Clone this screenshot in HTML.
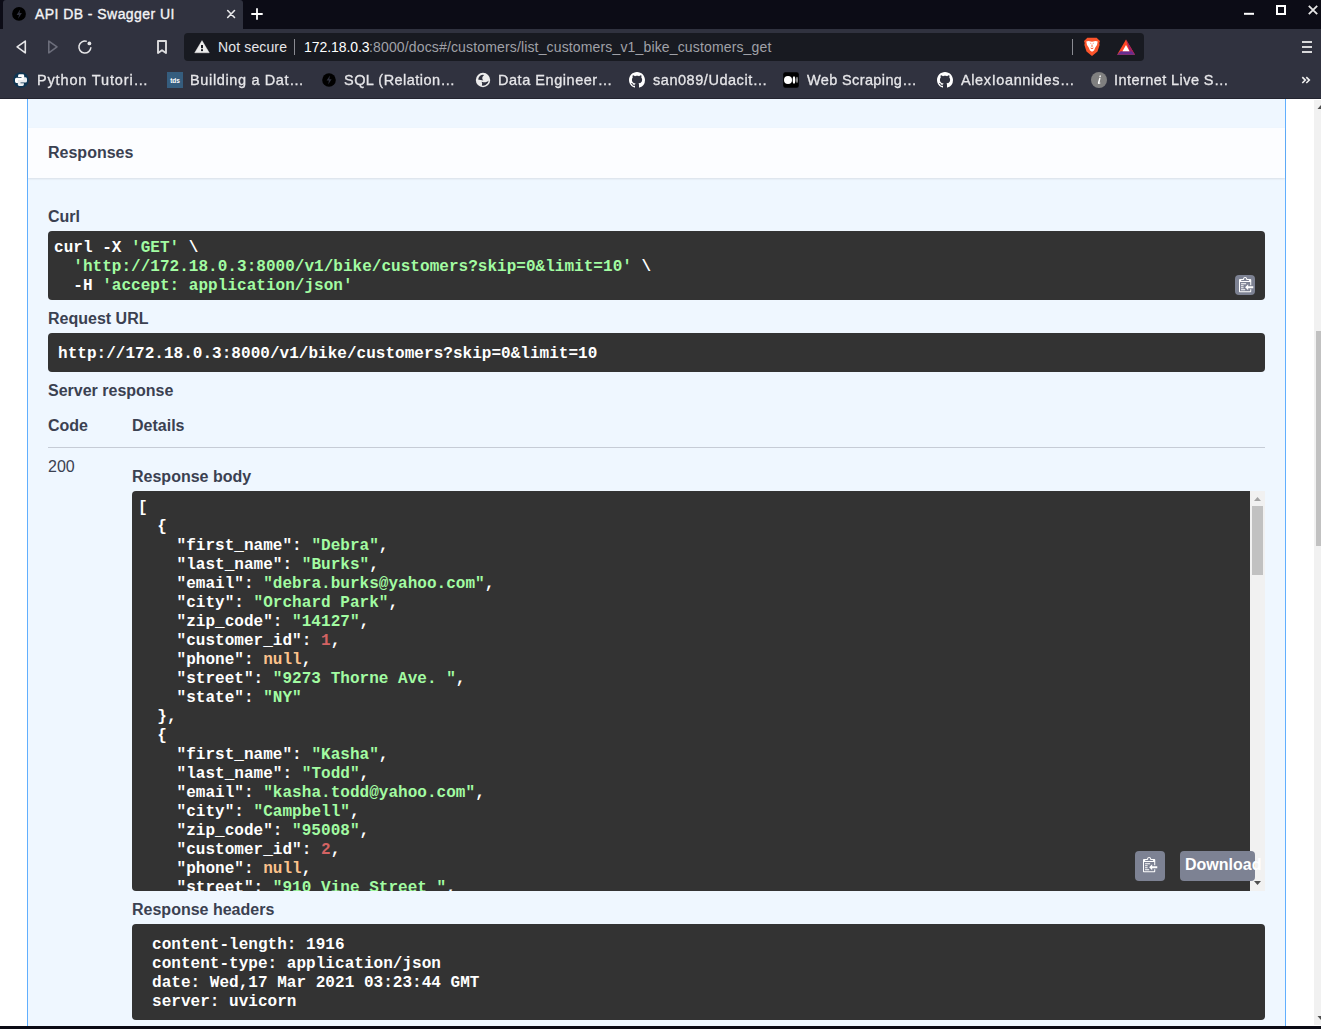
<!DOCTYPE html>
<html><head><meta charset="utf-8">
<style>
*{margin:0;padding:0;box-sizing:border-box}
html,body{width:1321px;height:1029px;overflow:hidden;background:#fff;font-family:"Liberation Sans",sans-serif}
div,span.a,svg.a{position:absolute}
.ct{color:#e6e6e9;font-size:14px;white-space:nowrap;line-height:16px}
.h{color:#3b4151;font-weight:bold;font-size:16px;white-space:nowrap;line-height:18px}
.code{background:#333;border-radius:4px;color:#fff;font-family:"Liberation Mono",monospace;font-weight:bold;font-size:16px;line-height:19px;white-space:pre;letter-spacing:0.03px}
.bm{top:72px;font-size:14.5px;-webkit-text-stroke:0.3px #e6e6e9;will-change:transform}
.s{color:#a2fca2}.n{color:#d36363}.l{color:#fcc28c}
.btn{background:#7d8293;border-radius:4px}
</style></head><body>
<!-- browser chrome -->
<div style="left:0;top:0;width:1321px;height:29px;background:#0c0c16"></div>
<div style="left:3px;top:0;width:240px;height:29px;background:#30323f;border-radius:3px 3px 0 0"></div>
<div style="left:0;top:29px;width:1321px;height:70px;background:#30323f"></div>
<div style="left:184px;top:33px;width:960px;height:28px;background:#181a21;border-radius:4px"></div>

<svg class="a" style="left:0;top:0" width="1321" height="99" viewBox="0 0 1321 99">
 <!-- tab favicon -->
 <circle cx="19" cy="13.9" r="6.9" fill="#000"/>
 <path d="M20.3 9.3 L16.6 14.9 L19 14.9 L18.1 18.8 L21.9 13.1 L19.5 13.1 Z" fill="#30323f"/>
 <!-- tab close -->
 <path d="M227.7 10.5 L234.5 17.5 M234.5 10.5 L227.7 17.5" stroke="#e8e8ea" stroke-width="1.6" stroke-linecap="round"/>
 <!-- new tab -->
 <path d="M257 8.3 V19.7 M251.3 14 H262.7" stroke="#fff" stroke-width="1.8"/>
 <!-- window controls -->
 <rect x="1244" y="12.8" width="10" height="2" fill="#fff"/>
 <rect x="1277" y="6" width="8" height="8" fill="none" stroke="#fff" stroke-width="2"/>
 <path d="M1308.8 5.8 L1317.2 14.2 M1317.2 5.8 L1308.8 14.2" stroke="#e6e6e6" stroke-width="1.8"/>
 <!-- back / fwd / reload -->
 <path d="M25.3 41.1 L17.1 46.9 L25.3 52.8 Z" fill="none" stroke="#e6e6e8" stroke-width="1.6" stroke-linejoin="round"/>
 <path d="M48.8 41.1 L57 46.9 L48.8 52.8 Z" fill="none" stroke="#6c6e7b" stroke-width="1.6" stroke-linejoin="round"/>
 <path d="M90.9 47.3 A6 6 0 1 1 86.8 41.4" fill="none" stroke="#e6e6e8" stroke-width="1.5"/>
 <circle cx="89.4" cy="43.4" r="1.9" fill="#e6e6e8"/>
 <!-- bookmark -->
 <path d="M158 41 H166 V53 L162 50.2 L158 53 Z" fill="none" stroke="#dcdcde" stroke-width="1.9" stroke-linejoin="round"/>
 <!-- warning -->
 <path d="M202 40.6 L209.3 52.8 H194.7 Z" fill="#ececec" stroke="#ececec" stroke-width="0.4" stroke-linejoin="round"/>
 <rect x="201" y="45" width="2" height="3.2" fill="#181a21"/>
 <rect x="201" y="49.2" width="2" height="1.9" fill="#181a21"/>
 <!-- brave lion -->
 <path d="M1087.3 37.8 H1096.7 L1098.4 39.6 L1100 41 L1099.3 43 L1099.6 45 L1097.5 51.5 L1092 56 L1086.5 51.5 L1084.4 45 L1084.7 43 L1084 41 L1085.6 39.6 Z" fill="#fb542b"/>
 <path d="M1086.3 41.5 L1088.5 41 L1092 41.8 L1095.5 41 L1097.7 41.5 L1097 45 L1095.3 47.5 L1094 50.5 L1092 51.8 L1090 50.5 L1088.7 47.5 L1087 45 Z" fill="#fff"/>
 <path d="M1090.4 43.2 L1091.4 44 M1093.6 43.2 L1092.6 44 M1092 45 V47.2 M1090.6 48 L1092 48.8 L1093.4 48" stroke="#fb542b" stroke-width="0.9" fill="none"/>
 <!-- BAT -->
 <path d="M1126 39.4 L1135 54.7 H1117.1 Z" fill="#ff4724"/>
 <path d="M1126 39.4 L1135 54.7 L1129.5 51 Z" fill="#9e1f63"/>
 <path d="M1117.1 54.7 H1135 L1131.5 51.3 H1120.6 Z" fill="#662d91"/>
 <path d="M1126 45 L1129.5 51.3 H1122.5 Z" fill="#fff"/>
 <!-- hamburger -->
 <rect x="1302" y="41" width="10" height="2" fill="#d8d8da"/>
 <rect x="1302" y="46" width="10" height="2" fill="#d8d8da"/>
 <rect x="1302" y="51" width="10" height="2" fill="#d8d8da"/>
 <!-- python -->
 <circle cx="21" cy="80.1" r="7.8" fill="#0e3552"/>
 <path d="M19.5 74.3 H22.8 Q24.2 74.3 24.2 75.7 V79.3 Q24.2 80.3 23.2 80.3 H19.5 Q18.2 80.3 18.2 81.6 V83 H16.4 Q15 83 15 81.3 V79.3 Q15 77.7 16.4 77.7 H21.5 V77 H18.1 V75.7 Q18.1 74.3 19.5 74.3 Z" fill="#fff"/>
 <path d="M22.5 85.9 H19.2 Q17.8 85.9 17.8 84.5 V80.9 Q17.8 79.9 18.8 79.9 H22.5 Q23.8 79.9 23.8 78.6 V77.2 H25.6 Q27 77.2 27 78.9 V80.9 Q27 82.5 25.6 82.5 H20.5 V83.2 H23.9 V84.5 Q23.9 85.9 22.5 85.9 Z" fill="#e8ecef"/>
 <!-- tds -->
 <rect x="167" y="72" width="16" height="16" fill="#355d7e"/>
 <text x="175" y="82.6" font-family="Liberation Sans" font-weight="bold" font-size="6.5" fill="#fff" text-anchor="middle">tds</text>
 <!-- SQL bolt -->
 <circle cx="329" cy="80" r="6.8" fill="#000"/>
 <path d="M330 75.4 L326.6 80.6 L328.9 80.6 L328.2 84.5 L331.6 79.3 L329.3 79.3 Z" fill="#30323f"/>
 <!-- globe -->
 <circle cx="483" cy="80" r="7.2" fill="#ececec"/>
 <path d="M478.1 79.4 Q478.5 76.6 480.8 75.3 Q482.6 74.5 484.1 75.1 Q482.3 76.4 482.2 78.1 Q482.3 79.6 483.4 80.6 Q480.6 79.7 478.1 79.4 Z" fill="#30323f"/>
 <path d="M481.9 85.6 Q482.6 83.4 481.6 81.7 Q484.6 82.6 486.2 82.1 Q487.6 81.6 488.7 80.4 Q488.4 83.5 485.6 85.1 Q483.6 85.9 481.9 85.6 Z" fill="#30323f"/>
 <!-- github -->
 <g transform="translate(629,72)"><path fill="#fff" d="M8 0C3.58 0 0 3.58 0 8c0 3.54 2.29 6.53 5.47 7.59.4.07.55-.17.55-.38 0-.19-.01-.82-.01-1.49-2.01.37-2.53-.49-2.69-.94-.09-.23-.48-.94-.82-1.13-.28-.15-.68-.52-.01-.53.63-.01 1.08.58 1.23.82.72 1.21 1.87.87 2.33.66.07-.52.28-.87.51-1.07-1.78-.2-3.64-.89-3.64-3.95 0-.87.31-1.59.82-2.15-.08-.2-.36-1.02.08-2.12 0 0 .67-.21 2.2.82.64-.18 1.32-.27 2-.27.68 0 1.36.09 2 .27 1.53-1.04 2.2-.82 2.2-.82.44 1.1.16 1.92.08 2.12.51.56.82 1.27.82 2.15 0 3.07-1.87 3.75-3.65 3.95.29.25.54.73.54 1.48 0 1.07-.01 1.93-.01 2.2 0 .21.15.46.55.38A8.013 8.013 0 0016 8c0-4.42-3.58-8-8-8z"/></g>
 <g transform="translate(937,72)"><path fill="#fff" d="M8 0C3.58 0 0 3.58 0 8c0 3.54 2.29 6.53 5.47 7.59.4.07.55-.17.55-.38 0-.19-.01-.82-.01-1.49-2.01.37-2.53-.49-2.69-.94-.09-.23-.48-.94-.82-1.13-.28-.15-.68-.52-.01-.53.63-.01 1.08.58 1.23.82.72 1.21 1.87.87 2.33.66.07-.52.28-.87.51-1.07-1.78-.2-3.64-.89-3.64-3.95 0-.87.31-1.59.82-2.15-.08-.2-.36-1.02.08-2.12 0 0 .67-.21 2.2.82.64-.18 1.32-.27 2-.27.68 0 1.36.09 2 .27 1.53-1.04 2.2-.82 2.2-.82.44 1.1.16 1.92.08 2.12.51.56.82 1.27.82 2.15 0 3.07-1.87 3.75-3.65 3.95.29.25.54.73.54 1.48 0 1.07-.01 1.93-.01 2.2 0 .21.15.46.55.38A8.013 8.013 0 0016 8c0-4.42-3.58-8-8-8z"/></g>
 <!-- medium -->
 <rect x="783.2" y="72.2" width="15.6" height="15.6" rx="2" fill="#000"/>
 <circle cx="788" cy="80" r="4" fill="#fff"/>
 <ellipse cx="794" cy="80" rx="1.3" ry="3.8" fill="#fff"/>
 <ellipse cx="797" cy="80" rx="0.7" ry="3.2" fill="#ccc"/>
 <!-- info -->
 <circle cx="1099" cy="80" r="8" fill="#808080"/>
 <path d="M1099.6 75.5 h1.4 l-0.3 1.6 h-1.4 z M1099.3 77.8 h1.3 l-1 4.6 q-0.1 0.6 0.5 0.4 l0.3 -0.2 l0.1 0.6 q-1 0.8 -2 0.7 q-0.9 -0.2 -0.6 -1.5 z" fill="#fff"/>
 <!-- chevrons -->
 <path d="M1302.3 77.2 L1305.3 80.1 L1302.3 83 M1306.3 77.2 L1309.3 80.1 L1306.3 83" fill="none" stroke="#eee" stroke-width="1.6"/>
</svg>

<div class="ct" style="left:35px;top:6px;font-size:14px;color:#f4f4f6;letter-spacing:0.44px;-webkit-text-stroke:0.35px #f4f4f6">API DB - Swagger UI</div>
<div class="ct" style="left:218px;top:39px;letter-spacing:0.14px">Not secure</div>
<div style="left:294px;top:39px;width:1px;height:16px;background:#8a8b92"></div>
<div class="ct" style="left:304px;top:39px;color:#fff;letter-spacing:-0.07px">172.18.0.3</div>
<div class="ct" style="left:369px;top:39px;color:#a0a1a8;letter-spacing:0.15px">:8000/docs#/customers/list_customers_v1_bike_customers_get</div>
<div style="left:1072px;top:39px;width:1px;height:16px;background:#8a8b92"></div>
<div class="ct bm" style="left:37px;letter-spacing:0.85px">Python Tutori…</div>
<div class="ct bm" style="left:190px;letter-spacing:0.64px">Building a Dat…</div>
<div class="ct bm" style="left:344px;letter-spacing:0.46px">SQL (Relation…</div>
<div class="ct bm" style="left:498px;letter-spacing:0.54px">Data Engineer…</div>
<div class="ct bm" style="left:653px;letter-spacing:0.54px">san089/Udacit…</div>
<div class="ct bm" style="left:807px;letter-spacing:0.37px">Web Scraping…</div>
<div class="ct bm" style="left:961px;letter-spacing:0.61px">AlexIoannides…</div>
<div class="ct bm" style="left:1114px;letter-spacing:0.43px">Internet Live S…</div>

<!-- page -->
<div style="left:0;top:99px;width:1321px;height:927px;background:#fff;overflow:hidden">
  <div style="left:27px;top:0;width:1259px;height:927px;background:#eff7ff;border-left:1px solid #61affe;border-right:1px solid #61affe"></div>
  <div style="left:28px;top:29px;width:1257px;height:50px;background:#fcfdff;box-shadow:0 1px 2px rgba(0,0,0,.1)"></div>
  <div style="left:1314px;top:1px;width:7px;height:925px;background:#f1f1f1"></div>
  <div style="left:1316px;top:232px;width:5px;height:215px;background:#c1c1c1"></div>
</div>
<div style="left:0;top:1026px;width:1321px;height:3px;background:#0a0a14"></div>

<!-- content -->
<div class="h" style="left:48px;top:144px">Responses</div>
<div class="h" style="left:48px;top:208px">Curl</div>
<div class="code" style="left:48px;top:231px;width:1217px;height:69px;padding:8px 6px">curl -X <span class="s">'GET'</span> \
  <span class="s">'http://172.18.0.3:8000/v1/bike/customers?skip=0&amp;limit=10'</span> \
  -H <span class="s">'accept: application/json'</span></div>
<div class="btn" style="left:1235px;top:275px;width:20px;height:20px"></div>

<div class="h" style="left:48px;top:310px">Request URL</div>
<div class="code" style="left:48px;top:333px;width:1217px;height:39px;padding:12px 10px">http://172.18.0.3:8000/v1/bike/customers?skip=0&amp;limit=10</div>

<div class="h" style="left:48px;top:382px">Server response</div>
<div class="h" style="left:48px;top:417px">Code</div>
<div class="h" style="left:132px;top:417px">Details</div>
<div style="left:48px;top:447px;width:1217px;height:1px;background:#c6ccd6"></div>
<div class="h" style="left:48px;top:458px;font-weight:normal">200</div>

<div class="h" style="left:132px;top:468px">Response body</div>
<div class="code" style="left:132px;top:491px;width:1118px;height:400px;padding:8px 6px;overflow:hidden;border-radius:4px 0 0 4px">[
  {
    "first_name": <span class="s">"Debra"</span>,
    "last_name": <span class="s">"Burks"</span>,
    "email": <span class="s">"debra.burks@yahoo.com"</span>,
    "city": <span class="s">"Orchard Park"</span>,
    "zip_code": <span class="s">"14127"</span>,
    "customer_id": <span class="n">1</span>,
    "phone": <span class="l">null</span>,
    "street": <span class="s">"9273 Thorne Ave. "</span>,
    "state": <span class="s">"NY"</span>
  },
  {
    "first_name": <span class="s">"Kasha"</span>,
    "last_name": <span class="s">"Todd"</span>,
    "email": <span class="s">"kasha.todd@yahoo.com"</span>,
    "city": <span class="s">"Campbell"</span>,
    "zip_code": <span class="s">"95008"</span>,
    "customer_id": <span class="n">2</span>,
    "phone": <span class="l">null</span>,
    "street": <span class="s">"910 Vine Street "</span>,
    "state": <span class="s">"CA"</span>
  },</div>
<div style="left:1250px;top:491px;width:15px;height:400px;background:#f1f1f1"></div>
<div style="left:1252px;top:506px;width:11px;height:69px;background:#c1c1c1"></div>
<div class="btn" style="left:1135px;top:851px;width:30px;height:30px"></div>
<div class="btn" style="left:1180px;top:851px;width:75px;height:30px"></div>
<div class="h" style="left:1185px;top:856px;color:#fff;font-size:16px">Download</div>

<div class="h" style="left:132px;top:901px">Response headers</div>
<div class="code" style="left:132px;top:924px;width:1133px;height:96px;padding:12px 20px">content-length: 1916
content-type: application/json
date: Wed,17 Mar 2021 03:23:44 GMT
server: uvicorn</div>

<div style="left:0;top:98px;width:1321px;height:1px;background:#23242f"></div>
<svg class="a" style="left:0;top:0" width="1321" height="1029" viewBox="0 0 1321 1029">
 <g transform="translate(1239,276) scale(1.02)"><path fill="#fff" d="M2 13h4v1H2v-1zm5-6H2v1h5V7zm2 3V8l-3 3 3 3v-2h5v-2H9zM4.5 9H2v1h2.5V9zM2 12h2.5v-1H2v1zm9 1h1v2c-.02.28-.11.52-.3.7-.19.18-.42.28-.7.3H1c-.55 0-1-.45-1-1V4c0-.55.45-1 1-1h3c0-1.11.89-2 2-2 1.11 0 2 .89 2 2h3c.55 0 1 .45 1 1v5h-1V6H1v9h10v-2zM2 5h8c0-.55-.45-1-1-1H8c-.55 0-1-.45-1-1s-.45-1-1-1-1 .45-1 1-.45 1-1 1H3c-.55 0-1 .45-1 1z"/></g>
 <g transform="translate(1143,856) scale(1.02)"><path fill="#fff" d="M2 13h4v1H2v-1zm5-6H2v1h5V7zm2 3V8l-3 3 3 3v-2h5v-2H9zM4.5 9H2v1h2.5V9zM2 12h2.5v-1H2v1zm9 1h1v2c-.02.28-.11.52-.3.7-.19.18-.42.28-.7.3H1c-.55 0-1-.45-1-1V4c0-.55.45-1 1-1h3c0-1.11.89-2 2-2 1.11 0 2 .89 2 2h3c.55 0 1 .45 1 1v5h-1V6H1v9h10v-2zM2 5h8c0-.55-.45-1-1-1H8c-.55 0-1-.45-1-1s-.45-1-1-1-1 .45-1 1-.45 1-1 1H3c-.55 0-1 .45-1 1z"/></g>
 <path d="M1254 501 L1261 501 L1257.5 497 Z" fill="#a3a3a3"/>
 <path d="M1254 881 L1261 881 L1257.5 885 Z" fill="#505050"/>
 <path d="M1317.5 109 L1324.5 109 L1321 105 Z" fill="#505050"/>
 <path d="M1317.5 1016 L1324.5 1016 L1321 1020 Z" fill="#505050"/>
</svg>
</body></html>
